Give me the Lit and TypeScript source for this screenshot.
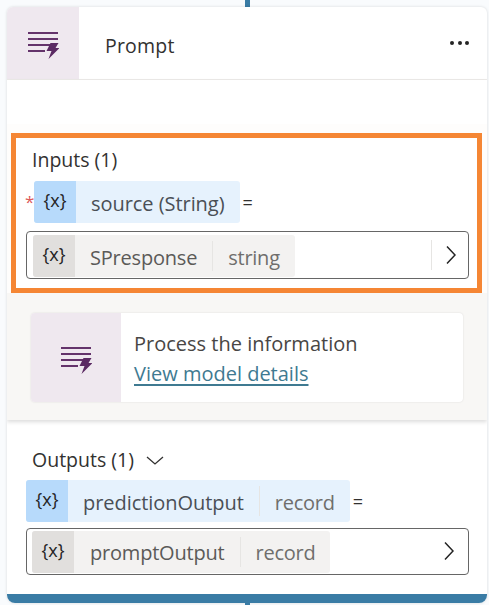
import { LitElement, html, css, svg } from "lit";
import { customElement } from "lit/decorators.js";

const promptIcon = svg`<svg class="pi" width="32" height="28" viewBox="0 0 32 28" fill="none">
  <g stroke="#64336b" stroke-width="2"><path d="M1 2h30M1 8h30M1 14h25M1 20h17"/></g>
  <path d="M23.5 12h8l-3 5h4L21.5 28l3-8h-5z" fill="#5b2a63"/></svg>`;
const chevronR = svg`<svg class="cr" width="10" height="20" viewBox="0 0 10 20" fill="none"><path d="M1 1.5L9 10 1 18.5" stroke="#242424" stroke-width="1.5"/></svg>`;
const chevronD = svg`<svg width="18" height="9" viewBox="0 0 18 9" fill="none"><path d="M1 1l8 7 8-7" stroke="#323130" stroke-width="1.3"/></svg>`;

@customElement("app-root")
export class AppRoot extends LitElement {
  static styles = css`
    :host { display: block; width: 489px; height: 605px; overflow: hidden; background: #f9fbfd;
      font-family: "Open Sans", "Noto Sans", sans-serif; color: #323130; }
    .conn { width: 5px; background: #3a7ca5; margin-left: 245px; }
    .conn.top { height: 7px; }
    .conn.bot { height: 2px; }
    .node { margin-left: 7px; width: 480px; height: 596px; background: #fff; border-radius: 6px 6px 8px 8px;
      box-shadow: 0 0 3px rgba(0,0,0,.14); display: flex; flex-direction: column; overflow: hidden; }
    .head { height: 72px; flex: none; display: flex; align-items: center; border-bottom: 1px solid #edebe9; }
    .tile { background: #efe8ef; display: flex; align-items: center; justify-content: center; flex: none; }
    .pi { margin-top: 4px; }
    .head .tile { width: 72px; height: 72px; }
    .title { margin-left: 26px; padding-top: 4px; font-size: 19.5px; font-weight: 500; letter-spacing: .2px; color: #323130; flex: 1; }
    .more { display: flex; gap: 3.5px; margin-right: 18px; margin-top: -1px; }
    .more i { width: 4px; height: 4px; border-radius: 50%; background: #242424; }
    .gray { height: 340px; flex: none; background: linear-gradient(#fff 44px, #fefdfc 44px, #fefdfc 213px, #f8f7f5 213px);
      box-shadow: 0 2px 4px rgba(0,0,0,.14); display: flex; flex-direction: column; }
    .hl { box-sizing: border-box; margin: 53px 0 0 4px; width: 471px; height: 160px; border: 5px solid #f58634;
      background: #fff; flex: none; padding: 8px 8px 0 10px; display: flex; flex-direction: column; }
    .label { font-size: 19.5px; font-weight: 500; height: 28px; line-height: 26px; margin-left: 6px; display: flex; align-items: center; }
    .row { display: flex; align-items: center; position: relative; }
    .inrow { padding-left: 8px; margin-top: 7px; }
    .star { position: absolute; left: -1px; top: 12px; color: #dc5a5a; font-size: 17px; line-height: 17px; }
    .pill { display: flex; align-items: stretch; height: 42px; border-radius: 3px; overflow: hidden; font-size: 20px; }
    .pill .x { width: 42px; display: flex; align-items: center; justify-content: center; font-size: 18px; flex: none; padding-bottom: 4px; box-sizing: border-box; }
    .pill span { display: flex; align-items: center; white-space: nowrap; padding-top: 2px; }
    .blue { background: #e6f2fd; color: #4a4f56; }
    .blue .x { background: #b7dafb; color: #242424; }
    .grey { background: #f3f2f1; color: #5b5a58; }
    .grey .x { background: #e1dfdd; color: #242424; }
    .name { padding-left: 15px; padding-right: 15px; letter-spacing: -.05px; }
    .grey .name { letter-spacing: -.2px; }
    .sep { width: 1px; background: #e6e5e3; margin: 6px 0; flex: none; }
    .type { padding-left: 15px; color: #6f6e6c; padding-right: 15px; letter-spacing: -.25px; }
    .eq { margin-left: 3px; font-size: 18px; color: #323130; }
    .field { box-sizing: border-box; height: 48px; border: 1px solid #666; border-radius: 4px; display: flex; align-items: center; background: #fff; }
    .field .end { margin-left: auto; display: flex; align-items: center; }
    .vr { width: 1px; height: 30px; background: #e6e5e3; margin-right: 14px; }
    .in-field { margin-top: 8px; width: 443px; padding-left: 6px; padding-top: 2px; }
    .in-field .end { margin-right: 12px; margin-top: -2px; }
    .card { margin: 20px 0 0 24px; width: 432px; height: 89px; flex: none; border-radius: 4px; background: #fff; display: flex; overflow: hidden;
      box-shadow: 0 0 2px rgba(0,0,0,.12); }
    .card .tile { width: 90px; height: 89px; }
    .card .txt { margin-left: 13px; padding-top: 16px; font-size: 20px; line-height: 30px; color: #484644; }
    a { display: block; color: #3f7a91; text-decoration: underline; text-decoration-thickness: 2px; text-underline-offset: 3px; }
    .out { padding: 27px 0 0 19px; display: flex; flex-direction: column; }
    .out .label { height: 26px; margin-left: 6px; gap: 12px; }
    .out .row { margin-top: 7px; }
    .out .field { margin-top: 6px; width: 443px; height: 47px; padding-left: 5px; }
    .out .field .name { padding-left: 16px; }
    .out .end { margin-right: 14px; margin-top: -2px; }
    .bar { margin-top: auto; height: 9px; background: #3a7ca5; flex: none; }
  `;

  private pill(cls: string, name: string, type?: string) {
    return html`<div class="pill ${cls}"><div class="x">{x}</div><span class="name">${name}</span>${type
      ? html`<div class="sep"></div><span class="type">${type}</span>` : ""}</div>`;
  }

  render() {
    return html`
      <div class="conn top"></div>
      <div class="node">
        <div class="head">
          <div class="tile">${promptIcon}</div>
          <div class="title">Prompt</div>
          <div class="more"><i></i><i></i><i></i></div>
        </div>
        <div class="gray">
          <div class="hl">
            <div class="label">Inputs (1)</div>
            <div class="row inrow">
              <span class="star">*</span>
              ${this.pill("blue", "source (String)")}
              <span class="eq">=</span>
            </div>
            <div class="field in-field">
              ${this.pill("grey", "SPresponse", "string")}
              <div class="end"><div class="vr"></div>${chevronR}</div>
            </div>
          </div>
          <div class="card">
            <div class="tile">${promptIcon}</div>
            <div class="txt">Process the information<a href="#">View model details</a></div>
          </div>
        </div>
        <div class="out">
          <div class="label">Outputs (1) ${chevronD}</div>
          <div class="row">${this.pill("blue", "predictionOutput", "record")}<span class="eq">=</span></div>
          <div class="field">
            ${this.pill("grey", "promptOutput", "record")}
            <div class="end">${chevronR}</div>
          </div>
        </div>
        <div class="bar"></div>
      </div>
      <div class="conn bot"></div>
    `;
  }
}
